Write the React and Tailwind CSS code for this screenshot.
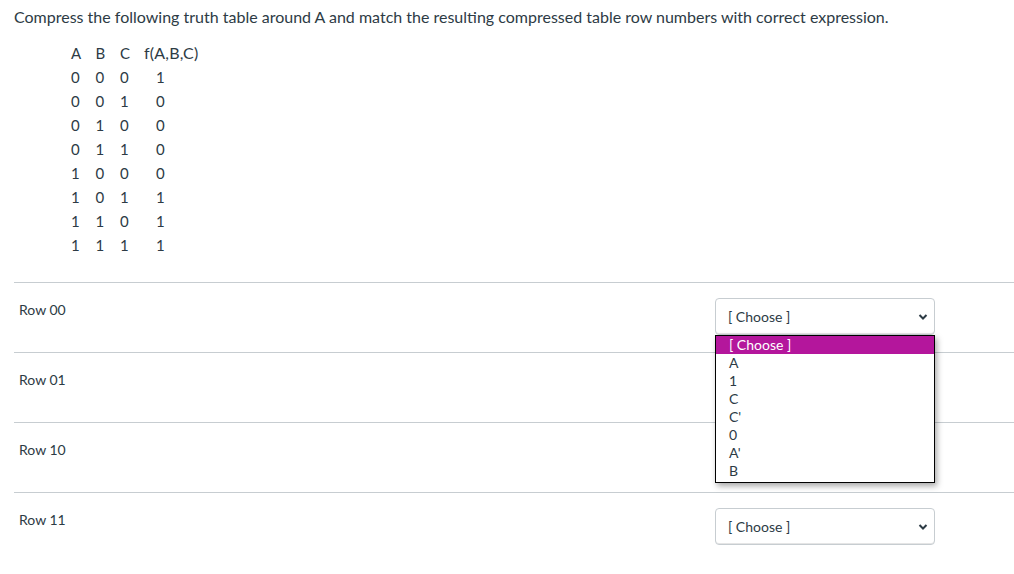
import React from "react";

const table = [
  ["0", "0", "0", "1"],
  ["0", "0", "1", "0"],
  ["0", "1", "0", "0"],
  ["0", "1", "1", "0"],
  ["1", "0", "0", "0"],
  ["1", "0", "1", "1"],
  ["1", "1", "0", "1"],
  ["1", "1", "1", "1"],
];

const options = ["A", "1", "C", "C'", "0", "A'", "B"];

const Chevron = () => (
  <svg width="10" height="8" viewBox="0 0 10 8" className="text-[#2d3b45]">
    <path d="M1.5 2 L5 5.5 L8.5 2" fill="none" stroke="currentColor" strokeWidth="2" />
  </svg>
);

const Select = () => (
  <div className="w-[220px] h-[37px] border border-[#c7cdd1] rounded-[4px] bg-white flex items-center justify-between pl-[12px] pr-[6px] text-[14px] text-[#2d3b45] shadow-[inset_0_-1px_0_#e5e5e5]">
    <span>[ Choose ]</span>
    <Chevron />
  </div>
);

const Row = ({ label, children }) => (
  <div className="h-[70px] border-t border-[#c7cdd1] flex justify-between pr-[79px]">
    <div className="pl-[5px] pt-[16px] text-[14px] text-[#2d3b45]">{label}</div>
    <div className="pt-[15px] relative">{children}</div>
  </div>
);

export default function App() {
  return (
    <div className="w-[1014px] h-[574px] bg-white font-['Lato','Liberation_Sans',sans-serif] text-[#2d3b45] pl-[14px] pt-[7px] overflow-hidden">
      <p className="text-[16px] leading-[20px]">
        Compress the following truth table around A and match the resulting compressed table row numbers with correct expression.
      </p>
      <div className="pl-[57px] pt-[16px] text-[15px] leading-[20px]">
        <div className="flex h-[24px] items-start">
          <span className="w-[24.5px]">A</span>
          <span className="w-[24.5px]">B</span>
          <span className="w-[24px]">C</span>
          <span className="text-[16px] tracking-[0.2px]">f(A,B,C)</span>
        </div>
        {table.map((r, i) => (
          <div key={i} className="flex h-[24px] items-start">
            <span className="w-[24.5px]">{r[0]}</span>
            <span className="w-[24.5px]">{r[1]}</span>
            <span className="w-[24px]">{r[2]}</span>
            <span className="pl-[12px]">{r[3]}</span>
          </div>
        ))}
      </div>
      <div className="mt-[23px]">
        <Row label="Row 00">
          <Select />
          <div className="absolute left-0 top-[52px] w-[220px] z-10 bg-white border border-black shadow-[2px_3px_6px_rgba(0,0,0,0.35)] text-[14px] leading-[18px] text-[#2d3b45] pb-[2px]">
            <div className="bg-[#b4169c] text-white pl-[13px]">[ Choose ]</div>
            {options.map((o) => (
              <div key={o} className="pl-[13px]">{o}</div>
            ))}
          </div>
        </Row>
        <Row label="Row 01" />
        <Row label="Row 10" />
        <Row label="Row 11">
          <Select />
        </Row>
      </div>
    </div>
  );
}
